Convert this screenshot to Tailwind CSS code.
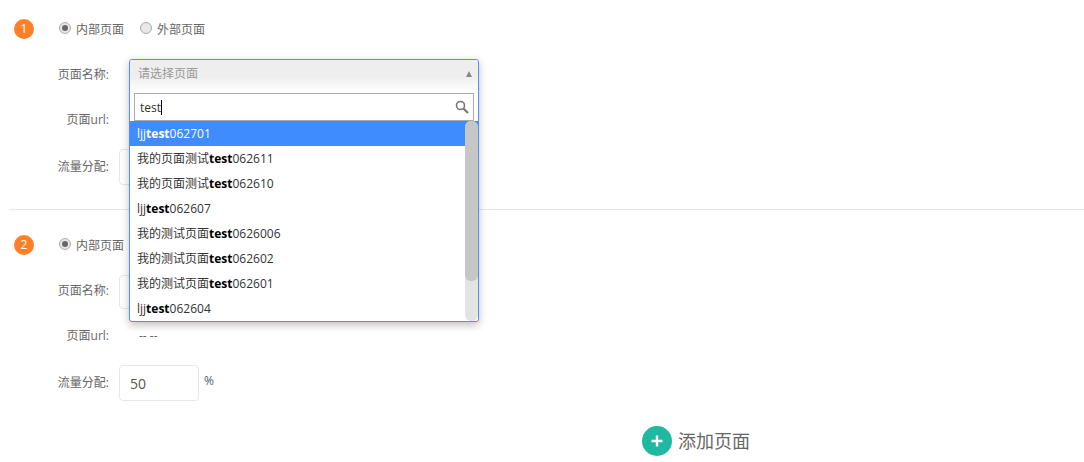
<!DOCTYPE html>
<html lang="zh">
  <head>
    <meta charset="UTF-8" />
    <title>添加页面</title>
    <script src="https://cdn.jsdelivr.net/npm/@tailwindcss/browser@4"></script>
  </head>
  <body class="bg-white overflow-hidden font-['Open_Sans','Noto_Sans_CJK_SC',sans-serif] text-[12px] text-[#666]">
    <div class="w-[1084px] h-[462px] pl-[9px] pt-[19px]">

      <!-- page 1 -->
      <section class="relative h-[191px] border-b border-[#e6e9ec]">
        <div class="flex items-center h-[20px]">
          <span class="w-[20px] h-[20px] ml-[5px] rounded-full bg-[#ff7f27] text-white flex items-center justify-center text-[12px]">1</span>
          <span class="ml-[25px] w-[12px] h-[12px] rounded-full border border-[#aaa] bg-[#e8e8e8] flex items-center justify-center -mt-[3px]"><span class="w-[6px] h-[6px] rounded-full bg-[#666]"></span></span>
          <span class="ml-[5px] mt-[1px]">内部页面</span>
          <span class="ml-[16px] w-[12px] h-[12px] rounded-full border border-[#aaa] bg-[#e8e8e8] -mt-[3px]"></span>
          <span class="ml-[5px] mt-[1px]">外部页面</span>
        </div>
        <div class="flex items-center h-[34px] mt-[20px]">
          <label class="w-[100px] text-right -mt-[2px]">页面名称:</label>
        </div>
        <div class="flex items-center h-[20px] mt-[17px]">
          <label class="w-[100px] text-right">页面url:</label>
        </div>
        <div class="flex items-center mt-[19px]">
          <label class="w-[100px] text-right">流量分配:</label>
          <span class="ml-[10px] w-[80px] h-[36px] rounded-[4px] border border-[#e3e8ec]"></span>
        </div>

        <!-- open dropdown, lies over the rows -->
        <div class="absolute z-10 left-[120px] top-[40px] w-[350px] h-[263px] bg-white border border-[#4d90fe] rounded-[3px] shadow-[0_3px_8px_rgba(0,0,0,0.25)] overflow-hidden">
          <div class="flex items-start justify-between h-[33px] pt-[5px] pl-[8px] pr-[6px] text-[#999] bg-gradient-to-b from-[#eee] from-50% to-white">
            <span>请选择页面</span>
            <span class="mt-[6px] w-0 h-0 border-x-[3.5px] border-x-transparent border-b-[6px] border-b-[#888]"></span>
          </div>
          <div class="mx-[4px] h-[28px] border border-[#aaa] flex items-center justify-between pl-[5px] pr-[4px] text-[#333]">
            <span class="flex items-center pt-[1px]">test<span class="w-px h-[15px] bg-black"></span></span>
            <svg width="14" height="14" viewBox="0 0 14 14" fill="none" stroke="#777">
              <circle cx="5.5" cy="5.5" r="4" stroke-width="1.6" />
              <path d="M8.5 8.5L13 13" stroke-width="2.2" />
            </svg>
          </div>
          <div class="relative">
            <ul class="text-[#333] text-[12px]">
              <li class="h-[25px] pl-[7px] leading-[25px] bg-[#3f8cff] text-white">ljj<b>test</b>062701</li>
              <li class="h-[25px] pl-[7px] leading-[25px]">我的页面测试<b class="text-black">test</b>062611</li>
              <li class="h-[25px] pl-[7px] leading-[25px]">我的页面测试<b class="text-black">test</b>062610</li>
              <li class="h-[25px] pl-[7px] leading-[25px]">ljj<b class="text-black">test</b>062607</li>
              <li class="h-[25px] pl-[7px] leading-[25px]">我的测试页面<b class="text-black">test</b>0626006</li>
              <li class="h-[25px] pl-[7px] leading-[25px]">我的测试页面<b class="text-black">test</b>062602</li>
              <li class="h-[25px] pl-[7px] leading-[25px]">我的测试页面<b class="text-black">test</b>062601</li>
              <li class="h-[25px] pl-[7px] leading-[25px]">ljj<b class="text-black">test</b>062604</li>
            </ul>
            <div class="absolute right-0 top-0 w-[13px] h-[200px] rounded-[6px] bg-[#e3e3e3]">
              <div class="w-full h-[160px] rounded-[6px] bg-[#c6c6c6]"></div>
            </div>
          </div>
        </div>
      </section>

      <!-- page 2 -->
      <section class="pt-[25px]">
        <div class="flex items-center h-[20px]">
          <span class="w-[20px] h-[20px] ml-[5px] rounded-full bg-[#ff7f27] text-white flex items-center justify-center text-[12px]">2</span>
          <span class="ml-[25px] w-[12px] h-[12px] rounded-full border border-[#aaa] bg-[#e8e8e8] flex items-center justify-center -mt-[3px]"><span class="w-[6px] h-[6px] rounded-full bg-[#666]"></span></span>
          <span class="ml-[5px] mt-[1px]">内部页面</span>
        </div>
        <div class="flex items-center h-[34px] mt-[20px]">
          <label class="w-[100px] text-right -mt-[2px]">页面名称:</label>
          <span class="ml-[10px] w-[40px] h-[34px] rounded-[4px] border border-[#e3e8ec]"></span>
        </div>
        <div class="flex items-center h-[20px] mt-[17px]">
          <label class="w-[100px] text-right">页面url:</label>
          <span class="ml-[30px]">-- --</span>
        </div>
        <div class="flex items-center mt-[19px]">
          <label class="w-[100px] text-right">流量分配:</label>
          <span class="ml-[10px] w-[80px] h-[36px] rounded-[4px] border border-[#e3e8ec] pl-[10px] flex items-center text-[14px] text-[#555]">50</span>
          <span class="ml-[5px] -mt-[4px] text-[#4d6470]">%</span>
        </div>
        <div class="flex items-center ml-[633px] mt-[25px]">
          <span class="w-[30px] h-[30px] rounded-full bg-[#1fb8a0] flex items-center justify-center">
            <svg width="14" height="14" viewBox="0 0 14 14" stroke="#fff" stroke-width="2.4"><path d="M7 1.5V12.5M1.5 7H12.5" /></svg>
          </span>
          <span class="ml-[6px] text-[18px] text-[#666]">添加页面</span>
        </div>
      </section>
    </div>
  </body>
</html>
